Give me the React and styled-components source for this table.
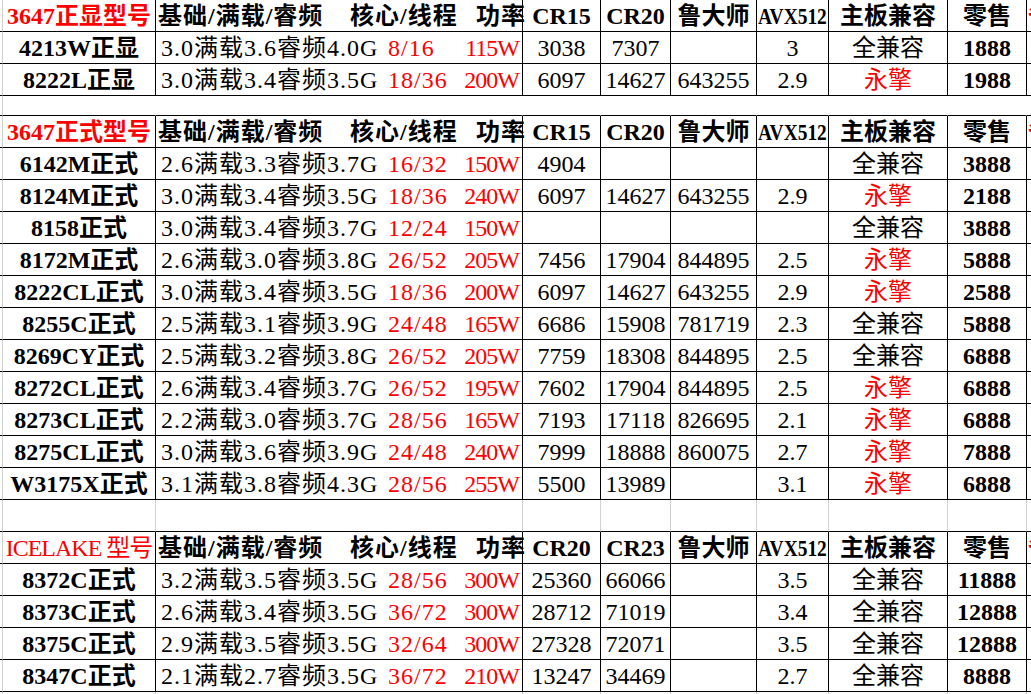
import React from 'react';
import styled, { createGlobalStyle } from 'styled-components';

const GlobalStyle = createGlobalStyle`
  html, body {
    margin: 0;
    padding: 0;
    background: #fff;
    overflow: hidden;
  }
  body {
    font-family: "Liberation Serif", "Noto Sans CJK SC", serif;
  }
`;

const COLS = '3px 153px 367px 78px 70px 86px 72px 119px 79px 60px';
const RED = '#ff0000';
const GRID = '#d0d0d0';

const sections = [
  {
    title: '3647正显型号',
    titleBold: true,
    scores: ['CR15', 'CR20'],
    gap: { h: 20, grid: false },
    rows: [
      ['4213W正显', '3.0满载3.6睿频4.0G', '8/16', '115W', '3038', '7307', '', '3', '全兼容', '1888'],
      ['8222L正显', '3.0满载3.4睿频3.5G', '18/36', '200W', '6097', '14627', '643255', '2.9', '永擎', '1988'],
    ],
  },
  {
    title: '3647正式型号',
    titleBold: true,
    scores: ['CR15', 'CR20'],
    gap: { h: 32, grid: true },
    rows: [
      ['6142M正式', '2.6满载3.3睿频3.7G', '16/32', '150W', '4904', '', '', '', '全兼容', '3888'],
      ['8124M正式', '3.0满载3.4睿频3.5G', '18/36', '240W', '6097', '14627', '643255', '2.9', '永擎', '2188'],
      ['8158正式', '3.0满载3.4睿频3.7G', '12/24', '150W', '', '', '', '', '全兼容', '3888'],
      ['8172M正式', '2.6满载3.0睿频3.8G', '26/52', '205W', '7456', '17904', '844895', '2.5', '永擎', '5888'],
      ['8222CL正式', '3.0满载3.4睿频3.5G', '18/36', '200W', '6097', '14627', '643255', '2.9', '永擎', '2588'],
      ['8255C正式', '2.5满载3.1睿频3.9G', '24/48', '165W', '6686', '15908', '781719', '2.3', '全兼容', '5888'],
      ['8269CY正式', '2.5满载3.2睿频3.8G', '26/52', '205W', '7759', '18308', '844895', '2.5', '全兼容', '6888'],
      ['8272CL正式', '2.6满载3.4睿频3.7G', '26/52', '195W', '7602', '17904', '844895', '2.5', '永擎', '6888'],
      ['8273CL正式', '2.2满载3.0睿频3.7G', '28/56', '165W', '7193', '17118', '826695', '2.1', '永擎', '6888'],
      ['8275CL正式', '3.0满载3.6睿频3.9G', '24/48', '240W', '7999', '18888', '860075', '2.7', '永擎', '7888'],
      ['W3175X正式', '3.1满载3.8睿频4.3G', '28/56', '255W', '5500', '13989', '', '3.1', '永擎', '6888'],
    ],
  },
  {
    title: 'ICELAKE 型号',
    titleBold: false,
    titleTight: true,
    scores: ['CR20', 'CR23'],
    gap: { h: 3, grid: true, last: true },
    rows: [
      ['8372C正式', '3.2满载3.5睿频3.5G', '28/56', '300W', '25360', '66066', '', '3.5', '全兼容', '11888'],
      ['8373C正式', '2.6满载3.4睿频3.5G', '36/72', '300W', '28712', '71019', '', '3.4', '全兼容', '12888'],
      ['8375C正式', '2.9满载3.5睿频3.5G', '32/64', '300W', '27328', '72071', '', '3.5', '全兼容', '12888'],
      ['8347C正式', '2.1满载2.7睿频3.5G', '36/72', '210W', '13247', '34469', '', '2.7', '全兼容', '8888'],
    ],
  },
];

const Sheet = styled.div`
  width: 1031px;
  height: 694px;
  overflow: hidden;
  background: #fff;
  color: #000;
  font-size: 24px;
  line-height: 1;
`;

const Row = styled.div`
  display: grid;
  grid-template-columns: ${COLS};
  height: ${(p) => p.$h || 32}px;
`;

const Cell = styled.div`
  box-sizing: border-box;
  display: flex;
  align-items: center;
  justify-content: center;
  white-space: nowrap;
  border-right: 1px solid #000;
  border-bottom: 1px solid #000;
  color: ${(p) => (p.$red ? RED : '#000')};
  font-weight: ${(p) => (p.$bold ? 700 : 400)};
  letter-spacing: ${(p) => (p.$tight ? '-1px' : 'normal')};
`;

const EdgeCell = styled(Cell)`
  border-right: 1px solid ${GRID};
`;

const GapCell = styled.div`
  box-sizing: border-box;
  border-right: 1px solid ${(p) => (p.$line ? GRID : 'transparent')};
  border-bottom: ${(p) => (p.$last ? 'none' : '1px solid #000')};
`;

const SqueezedLabel = styled.span`
  display: inline-block;
  transform: scaleX(0.81);
`;

const ExtraCell = styled(Cell)`
  border-right: none;
  justify-content: flex-start;
  padding-left: 1px;
  overflow: hidden;
`;

const Mid = styled.div`
  box-sizing: border-box;
  display: flex;
  align-items: center;
  border-right: 1px solid #000;
  border-bottom: 1px solid #000;
  white-space: nowrap;
  letter-spacing: 1px;
  font-weight: ${(p) => (p.$bold ? 700 : 400)};
`;

const Part = styled.span`
  flex: ${(p) => (p.$w ? `0 0 ${p.$w}px` : '1 1 auto')};
  box-sizing: border-box;
  padding-left: ${(p) => p.$pl || 0}px;
  padding-right: ${(p) => p.$pr || 0}px;
  text-align: ${(p) => p.$align || 'left'};
  color: ${(p) => (p.$red ? RED : '#000')};
  ${(p) => p.$narrow && 'letter-spacing: -1px;'}
`;

const HeaderRow = ({ s }) => (
  <Row>
    <EdgeCell />
    <Cell $red $bold={s.titleBold} $tight={s.titleTight}>{s.title}</Cell>
    <Mid $bold>
      <Part $w={192} $pl={2}>基础/满载/睿频</Part>
      <Part $w={126} $pl={2}>核心/线程</Part>
      <Part $pl={2}>功率</Part>
    </Mid>
    <Cell $bold>{s.scores[0]}</Cell>
    <Cell $bold>{s.scores[1]}</Cell>
    <Cell $bold>鲁大师</Cell>
    <Cell $bold><SqueezedLabel>AVX512</SqueezedLabel></Cell>
    <Cell $bold>主板兼容</Cell>
    <Cell $bold>零售</Cell>
    <ExtraCell $red $bold>备注</ExtraCell>
  </Row>
);

const DataRow = ({ r }) => {
  const [model, freq, cores, power, s1, s2, lu, avx, board, price] = r;
  return (
    <Row>
      <EdgeCell />
      <Cell $bold>{model}</Cell>
      <Mid>
        <Part $w={232} $pl={5}>{freq}</Part>
        <Part $w={70} $red>{cores}</Part>
        <Part $red $narrow $align="right" $pr={3}>{power}</Part>
      </Mid>
      <Cell>{s1}</Cell>
      <Cell>{s2}</Cell>
      <Cell>{lu}</Cell>
      <Cell>{avx}</Cell>
      <Cell $red={board === '永擎'}>{board}</Cell>
      <Cell $bold>{price}</Cell>
      <ExtraCell />
    </Row>
  );
};

const GapRow = ({ gap }) => (
  <Row $h={gap.h}>
    {Array.from({ length: 10 }).map((_, i) => (
      <GapCell
        key={i}
        $line={i === 0 || (gap.grid && i < 9)}
        $last={gap.last}
      />
    ))}
  </Row>
);

export default function App() {
  return (
    <>
      <GlobalStyle />
      <Sheet>
        {sections.map((s) => (
          <React.Fragment key={s.title}>
            <HeaderRow s={s} />
            {s.rows.map((r) => (
              <DataRow key={r[0]} r={r} />
            ))}
            <GapRow gap={s.gap} />
          </React.Fragment>
        ))}
      </Sheet>
    </>
  );
}
